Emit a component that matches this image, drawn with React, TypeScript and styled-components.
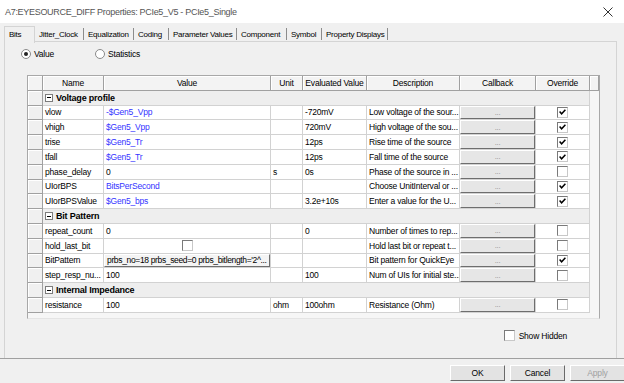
import styled, { createGlobalStyle } from "styled-components";

const GlobalStyle = createGlobalStyle`
  html, body {
    margin: 0;
    padding: 0;
    background: #f0f0f0;
  }
  body {
    font-family: "Liberation Sans", Arial, sans-serif;
    font-size: 8.5px;
    letter-spacing: -0.2px;
    color: #000;
  }
  * { box-sizing: border-box; }
`;

const COLS = "15px 61px 167px 32px 64px 93px 76px 54px 9px";

const Window = styled.div`
  width: 624px;
  height: 383px;
  overflow: hidden;
  display: flex;
  flex-direction: column;
  background: #f0f0f0;
`;

const TitleBar = styled.div`
  height: 23px;
  flex: none;
  background: #ffffff;
  display: flex;
  align-items: center;
  justify-content: space-between;
  padding: 0 11px 0 5px;
  color: #555555;
  font-size: 9px;
  letter-spacing: -0.3px;
`;

const TabStrip = styled.div`
  height: 16px;
  flex: none;
  margin-top: 3px;
  margin-bottom: -1px;
  padding-left: 4px;
  display: flex;
  position: relative;
  z-index: 1;
  font-size: 8px;
  letter-spacing: -0.25px;
`;

const Tab = styled.div<{ $w: number; $active?: boolean }>`
  width: ${p => p.$w}px;
  height: ${p => (p.$active ? "17px" : "12px")};
  margin-top: ${p => (p.$active ? "0" : "2px")};
  padding-left: 4px;
  display: flex;
  align-items: center;
  white-space: nowrap;
  overflow: hidden;
  background: ${p => (p.$active ? "#f0f0f0" : "transparent")};
  border: ${p => (p.$active ? "1px solid #d4d4d4" : "none")};
  border-bottom: none;
  border-right: 1px solid ${p => (p.$active ? "#d4d4d4" : "#8c8c8c")};
  padding-bottom: ${p => (p.$active ? "1px" : "0")};
`;

const Panel = styled.div`
  height: 317px;
  flex: none;
  margin: 0 7px 0 4px;
  border: 1px solid #d4d4d4;
  border-bottom: none;
  display: flex;
  flex-direction: column;
`;

const RadioRow = styled.div`
  height: 24px;
  display: flex;
  align-items: center;
  padding-left: 16px;
`;

const RadioOption = styled.label<{ $w: number }>`
  width: ${p => p.$w}px;
  display: flex;
  align-items: center;
  gap: 3px;
`;

const RadioDot = styled.span<{ $on?: boolean }>`
  width: 10px;
  height: 10px;
  border-radius: 50%;
  border: 1px solid #8a8a8a;
  background: #fff;
  display: flex;
  align-items: center;
  justify-content: center;
  &::after {
    content: "";
    width: 4px;
    height: 4px;
    border-radius: 50%;
    background: ${p => (p.$on ? "#222" : "transparent")};
  }
`;

const Grid = styled.div`
  margin: 9px 0 0 22px;
  width: 573px;
  height: 244px;
  background: #f6f6f6;
  border: 1px solid #a8a8a8;
  border-bottom-color: #e4e4e4;
  overflow: hidden;
`;

const GridRow = styled.div`
  display: grid;
  grid-template-columns: ${COLS};
  height: 14.8px;
`;

const HeadCell = styled.div`
  background: #f3f3f3;
  border-right: 1px solid #a0a0a0;
  border-bottom: 1px solid #a0a0a0;
  box-shadow: inset 1px 1px 0 #ffffff;
  display: flex;
  align-items: center;
  justify-content: center;
  white-space: nowrap;
  overflow: hidden;
`;

const RowHead = styled.div`
  background: #f0f0f0;
  border-right: 1px solid #a0a0a0;
  border-bottom: 1px solid #a0a0a0;
  box-shadow: inset 1px 1px 0 #ffffff;
`;

const Cell = styled.div<{ $color?: string; $center?: boolean; $flush?: boolean }>`
  background: #ffffff;
  border-right: 1px solid #d2d2d2;
  border-bottom: 1px solid #d2d2d2;
  color: ${p => p.$color || "#000"};
  display: flex;
  align-items: center;
  justify-content: ${p => (p.$center ? "center" : "flex-start")};
  padding-left: ${p => (p.$center || p.$flush ? "0" : "2px")};
  white-space: nowrap;
  overflow: hidden;
`;

const CategoryCell = styled.div`
  grid-column: 2 / 9;
  background: #eeeeee;
  border-bottom: 1px solid #d2d2d2;
  border-right: 1px solid #d2d2d2;
  display: flex;
  align-items: center;
  gap: 3px;
  padding-left: 2px;
  font-weight: bold;
  font-size: 9px;
`;

const Collapse = styled.span`
  width: 8px;
  height: 8px;
  border: 1px solid #7c7c7c;
  background: #fff;
  display: flex;
  align-items: center;
  justify-content: center;
  &::after {
    content: "";
    width: 4px;
    height: 1px;
    background: #000;
  }
`;

const CallbackButton = styled.div`
  width: 100%;
  height: 100%;
  background: #e6e6e6;
  border: 1px solid;
  border-color: #ffffff #6e6e6e #6e6e6e #ffffff;
  color: #8a8a8a;
  font-size: 7.5px;
  display: flex;
  align-items: center;
  justify-content: center;
`;

const ValueBox = styled.div`
  width: 100%;
  height: 100%;
  background: #f4f4f4;
  border: 1px solid;
  border-color: #ffffff #6e6e6e #6e6e6e #ffffff;
  padding-left: 2px;
  display: flex;
  align-items: center;
  white-space: nowrap;
  overflow: hidden;
  letter-spacing: -0.35px;
`;

const Box = styled.span`
  width: 11px;
  height: 11px;
  flex: none;
  background: #fff;
  border: 1px solid;
  border-color: #7a7a7a #c8c8c8 #c8c8c8 #7a7a7a;
  display: flex;
  align-items: center;
  justify-content: center;
`;

const PanelFooter = styled.div`
  flex: 1;
  display: flex;
  align-items: center;
  justify-content: flex-end;
  gap: 4px;
  padding: 0 49px 6px 0;
`;

const Divider = styled.div`
  height: 1px;
  flex: none;
  background: #a0a0a0;
`;

const ButtonBar = styled.div`
  flex: 1;
  display: flex;
  justify-content: flex-end;
  gap: 5px;
  padding-top: 6px;
  margin-right: -1px;
`;

const DialogButton = styled.div<{ $disabled?: boolean }>`
  width: 55px;
  height: 16px;
  background: #e3e3e3;
  border: 1px solid;
  border-color: #ffffff #6a6a6a #6a6a6a #ffffff;
  color: ${p => (p.$disabled ? "#a0a0a0" : "#000")};
  display: flex;
  align-items: center;
  justify-content: center;
`;

function Check({ on }: { on?: boolean }) {
  return (
    <Box>
      {on && (
        <svg width="7" height="6" viewBox="0 0 7 6">
          <path d="M0.6 2.6 L2.6 4.8 L6.4 0.8" fill="none" stroke="#000" strokeWidth="1.5" />
        </svg>
      )}
    </Box>
  );
}

type DataRow = {
  kind: "data";
  name: string;
  value: string;
  vtype: "blue" | "text" | "check" | "box";
  unit?: string;
  evalv?: string;
  desc: string;
  override?: boolean;
};
type CatRow = { kind: "cat"; label: string };

const rows: (DataRow | CatRow)[] = [
  { kind: "cat", label: "Voltage profile" },
  { kind: "data", name: "vlow", value: "-$Gen5_Vpp", vtype: "blue", evalv: "-720mV", desc: "Low voltage of the sour...", override: true },
  { kind: "data", name: "vhigh", value: "$Gen5_Vpp", vtype: "blue", evalv: "720mV", desc: "High voltage of the sou...", override: true },
  { kind: "data", name: "trise", value: "$Gen5_Tr", vtype: "blue", evalv: "12ps", desc: "Rise time of the source", override: true },
  { kind: "data", name: "tfall", value: "$Gen5_Tr", vtype: "blue", evalv: "12ps", desc: "Fall time of the source", override: true },
  { kind: "data", name: "phase_delay", value: "0", vtype: "text", unit: "s", evalv: "0s", desc: "Phase of the source in ..." },
  { kind: "data", name: "UIorBPS", value: "BitsPerSecond", vtype: "blue", desc: "Choose UnitInterval or ...", override: true },
  { kind: "data", name: "UIorBPSValue", value: "$Gen5_bps", vtype: "blue", evalv: "3.2e+10s", desc: "Enter a value for the U...", override: true },
  { kind: "cat", label: "Bit Pattern" },
  { kind: "data", name: "repeat_count", value: "0", vtype: "text", evalv: "0", desc: "Number of times to rep..." },
  { kind: "data", name: "hold_last_bit", value: "", vtype: "check", desc: "Hold last bit or repeat t..." },
  { kind: "data", name: "BitPattern", value: "prbs_no=18 prbs_seed=0 prbs_bitlength='2^...", vtype: "box", desc: "Bit pattern for QuickEye", override: true },
  { kind: "data", name: "step_resp_nu...", value: "100", vtype: "text", evalv: "100", desc: "Num of UIs for initial ste..." },
  { kind: "cat", label: "Internal Impedance" },
  { kind: "data", name: "resistance", value: "100", vtype: "text", unit: "ohm", evalv: "100ohm", desc: "Resistance (Ohm)" },
];

const tabs: [string, number][] = [
  ["Bits", 31],
  ["Jitter_Clock", 49],
  ["Equalization", 50],
  ["Coding", 35],
  ["Parameter Values", 68],
  ["Component", 50],
  ["Symbol", 35],
  ["Property Displays", 66],
];

const headers = ["Name", "Value", "Unit", "Evaluated Value", "Description", "Callback", "Override"];

function ValueCell({ r }: { r: DataRow }) {
  if (r.vtype === "check")
    return (
      <Cell $center>
        <Check />
      </Cell>
    );
  if (r.vtype === "box")
    return (
      <Cell $flush>
        <ValueBox>{r.value}</ValueBox>
      </Cell>
    );
  return <Cell $color={r.vtype === "blue" ? "#3434ff" : "#000"}>{r.value}</Cell>;
}

export default function App() {
  return (
    <Window>
      <GlobalStyle />
      <TitleBar>
        <span>A7:EYESOURCE_DIFF Properties: PCIe5_V5 - PCIe5_Single</span>
        <svg width="10" height="10" viewBox="0 0 10 10">
          <path d="M0.5 0.5 L9.5 9.5 M9.5 0.5 L0.5 9.5" stroke="#333" strokeWidth="1" />
        </svg>
      </TitleBar>
      <TabStrip>
        {tabs.map(([t, w], i) => (
          <Tab key={t} $w={w} $active={i === 0}>
            {t}
          </Tab>
        ))}
      </TabStrip>
      <Panel>
        <RadioRow>
          <RadioOption $w={74}>
            <RadioDot $on />
            Value
          </RadioOption>
          <RadioOption $w={80}>
            <RadioDot />
            Statistics
          </RadioOption>
        </RadioRow>
        <Grid>
          <GridRow>
            <HeadCell />
            {headers.map(h => (
              <HeadCell key={h}>{h}</HeadCell>
            ))}
            <HeadCell />
          </GridRow>
          {rows.map((r, i) =>
            r.kind === "cat" ? (
              <GridRow key={i}>
                <RowHead />
                <CategoryCell>
                  <Collapse />
                  {r.label}
                </CategoryCell>
              </GridRow>
            ) : (
              <GridRow key={i}>
                <RowHead />
                <Cell>{r.name}</Cell>
                <ValueCell r={r} />
                <Cell>{r.unit}</Cell>
                <Cell>{r.evalv}</Cell>
                <Cell>{r.desc}</Cell>
                <Cell $flush>
                  <CallbackButton>...</CallbackButton>
                </Cell>
                <Cell $center>
                  <Check on={r.override} />
                </Cell>
              </GridRow>
            )
          )}
        </Grid>
        <PanelFooter>
          <Check />
          Show Hidden
        </PanelFooter>
      </Panel>
      <Divider />
      <ButtonBar>
        <DialogButton>OK</DialogButton>
        <DialogButton>Cancel</DialogButton>
        <DialogButton $disabled>Apply</DialogButton>
      </ButtonBar>
    </Window>
  );
}
